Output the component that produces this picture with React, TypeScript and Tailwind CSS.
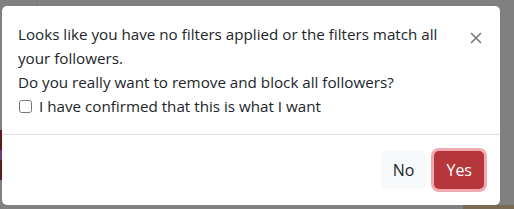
import React from "react";

export default function App() {
  return (
    <div className="relative w-[514px] h-[209px] overflow-hidden bg-[#808080] font-['Segoe_UI','Open_Sans',sans-serif] text-[#212529]">
      {/* bits of the page behind the backdrop */}
      <div className="absolute left-[36px] top-0 w-px h-[6px] bg-[#747474]" />
      <div className="absolute left-0 top-[130px] w-[2px] h-[50px] bg-[#5e1a1f]" />
      <div className="absolute left-0 top-[150px] w-[2px] h-[10px] bg-[#6a3f7a]" />
      <div className="absolute left-[463px] top-[205px] w-[51px] h-[4px] bg-[#776b55]" />

      <div className="absolute left-[2px] top-[6px] w-[498px] bg-white rounded-[5px] flex flex-col">
        <div className="flex p-4 text-[15.2px] leading-6">
          <div className="flex-1">
            <p className="whitespace-nowrap">
              Looks like you have no filters applied or the filters match all
              <br />
              your followers.
            </p>
            <p className="whitespace-nowrap">Do you really want to remove and block all followers?</p>
            <label className="flex items-center whitespace-nowrap">
              <input type="checkbox" className="w-[13px] h-[13px] ml-[1px] mr-[7px]" />
              I have confirmed that this is what I want
            </label>
          </div>
          <button className="w-6 h-6 -mr-1 mt-[4px] flex items-center justify-center self-start">
            <svg width="12" height="12" viewBox="0 0 16 16" fill="none" stroke="#7d7d7d" strokeWidth="2.3" strokeLinecap="round">
              <path d="M2 2L14 14M14 2L2 14" />
            </svg>
          </button>
        </div>
        <div className="border-t border-[#dee2e6] flex justify-end items-center p-3">
          <button className="m-1 h-[38px] px-3 rounded-[5px] bg-[#f8f9fa] text-[16px]">No</button>
          <button className="m-1 h-[38px] px-3 rounded-[5px] bg-[#b5373b] text-white text-[16px] shadow-[0_0_0_3px_rgba(225,83,97,0.5)]">Yes</button>
        </div>
      </div>
    </div>
  );
}
